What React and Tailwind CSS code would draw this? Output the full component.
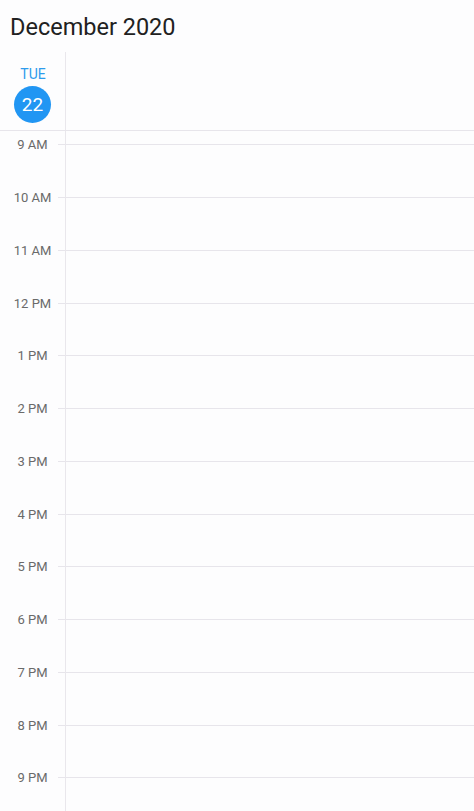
import React from "react";

const hours = ["9 AM","10 AM","11 AM","12 PM","1 PM","2 PM","3 PM","4 PM","5 PM","6 PM","7 PM","8 PM","9 PM"];

export default function App() {
  return (
    <div className="w-[474px] h-[811px] overflow-hidden bg-[#fdfdfe] flex flex-col" style={{ fontFamily: "Roboto, 'Noto Sans', sans-serif" }}>
      <div className="h-[52px] shrink-0 flex items-center pl-[10px] pt-[3px]">
        <span className="text-[23.5px] leading-none text-[#212121]">December 2020</span>
      </div>
      <div className="h-[79px] shrink-0 flex border-b border-[#e7e5eb]">
        <div className="w-[65px] flex flex-col items-center pt-[14px]">
          <span className="text-[14px] leading-[16px] text-[#2e9bec] pl-[1px]">TUE</span>
          <div className="mt-[4px] w-[37px] h-[37px] rounded-full bg-[#2196f3] flex items-center justify-center">
            <span className="text-[19px] leading-none text-white">22</span>
          </div>
        </div>
        <div className="flex-1 border-l border-[#e9e7ec]" />
      </div>
      <div className="flex-1 overflow-hidden flex flex-col">
        <div className="-mt-[12.4px] flex flex-col flex-1">
          {hours.map((h) => (
            <div key={h} className="h-[52.75px] shrink-0 flex items-center">
              <div className="w-[58px] pl-[7px] text-center text-[13px] leading-none text-[#6a6a6a]">{h}</div>
              <div className="w-[7px] h-px bg-[#e7e5eb]" />
              <div className="flex-1 self-stretch border-l border-[#e9e7ec] flex items-center">
                <div className="w-full h-px bg-[#e7e5eb]" />
              </div>
            </div>
          ))}
          <div className="flex-1 flex">
            <div className="w-[65px]" />
            <div className="flex-1 border-l border-[#e9e7ec]" />
          </div>
        </div>
      </div>
    </div>
  );
}
